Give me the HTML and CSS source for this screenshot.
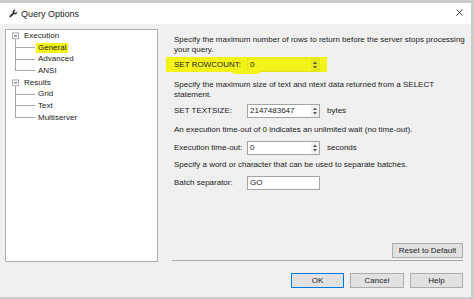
FILE: index.html
```html
<!DOCTYPE html>
<html>
<head>
<meta charset="utf-8">
<link rel="stylesheet" href="styles.css">
</head>
<body>
<div class="window">
  <div class="titlebar">
    <svg class="wrench" width="9" height="9" viewBox="0 0 16 16"><path d="M15 4.2l-2.7 2.7-2.4-.7-.7-2.4L11.9 1A4.3 4.3 0 0 0 6.6 6.6L1.2 12a1.6 1.6 0 0 0 2.3 2.3L8.9 9A4.3 4.3 0 0 0 15 4.2z" fill="#2b2b2b"/></svg>
    <span class="title">Query Options</span>
    <svg class="close" width="7" height="7" viewBox="0 0 7 7"><path d="M0.5 0.5L6.5 6.5M6.5 0.5L0.5 6.5" stroke="#333" stroke-width="0.9"/></svg>
  </div>
  <div class="body">
    <div class="main">
      <div class="tree">
        <div class="row parent">
          <svg class="exp" width="7" height="12" viewBox="0 0 7 12"><line x1="3.5" y1="9.5" x2="3.5" y2="12" stroke="#a6a6a6" stroke-width="1"/><rect x="0.5" y="3" width="6" height="6" fill="#fff" stroke="#a6a6a6" stroke-width="1"/><line x1="2" y1="6" x2="5" y2="6" stroke="#444" stroke-width="1"/></svg>
          <span class="ptext">Execution</span>
        </div>
        <div class="row child"><span class="conn"></span><span class="label sel">General</span></div>
        <div class="row child"><span class="conn"></span><span class="label">Advanced</span></div>
        <div class="row child"><span class="conn last"></span><span class="label">ANSI</span></div>
        <div class="row parent">
          <svg class="exp" width="7" height="12" viewBox="0 0 7 12"><line x1="3.5" y1="9.5" x2="3.5" y2="12" stroke="#a6a6a6" stroke-width="1"/><rect x="0.5" y="3" width="6" height="6" fill="#fff" stroke="#a6a6a6" stroke-width="1"/><line x1="2" y1="6" x2="5" y2="6" stroke="#444" stroke-width="1"/></svg>
          <span class="ptext">Results</span>
        </div>
        <div class="row child"><span class="conn"></span><span class="label">Grid</span></div>
        <div class="row child"><span class="conn"></span><span class="label">Text</span></div>
        <div class="row child"><span class="conn last"></span><span class="label">Multiserver</span></div>
      </div>
      <div class="panel">
        <p class="desc d1">Specify the maximum number of rows to return before the server stops processing your query.</p>
        <div class="field f1 marked">
          <span class="flabel">SET ROWCOUNT:</span>
          <span class="box spin yellow"><span class="val">0</span><svg class="spinner" width="8" height="12" viewBox="0 0 8 12"><path d="M2 5L4 2.5L6 5Z" fill="#555"/><path d="M2 7L4 9.5L6 7Z" fill="#555"/></svg></span>
          <span class="tail"></span>
        </div>
        <p class="desc d2">Specify the maximum size of text and ntext data returned from a SELECT statement.</p>
        <div class="field f2">
          <span class="flabel">SET TEXTSIZE:</span>
          <span class="box spin"><span class="val">2147483647</span><svg class="spinner" width="8" height="12" viewBox="0 0 8 12"><path d="M2 5L4 2.5L6 5Z" fill="#555"/><path d="M2 7L4 9.5L6 7Z" fill="#555"/></svg></span>
          <span class="unit">bytes</span>
        </div>
        <p class="desc d3">An execution time-out of 0 indicates an unlimited wait (no time-out).</p>
        <div class="field f3">
          <span class="flabel">Execution time-out:</span>
          <span class="box spin"><span class="val">0</span><svg class="spinner" width="8" height="12" viewBox="0 0 8 12"><path d="M2 5L4 2.5L6 5Z" fill="#555"/><path d="M2 7L4 9.5L6 7Z" fill="#555"/></svg></span>
          <span class="unit">seconds</span>
        </div>
        <p class="desc d4">Specify a word or character that can be used to separate batches.</p>
        <div class="field f4">
          <span class="flabel">Batch separator:</span>
          <span class="box"><span class="val">GO</span></span>
        </div>
        <button class="btn reset">Reset to Default</button>
      </div>
    </div>
    <div class="footer">
      <button class="btn ok">OK</button>
      <button class="btn cancel">Cancel</button>
      <button class="btn help">Help</button>
    </div>
  </div>
</div>
</body>
</html>
```

FILE: styles.css
```css
html, body {
  margin: 0;
  padding: 0;
  background: #cbcbcb;
}

body {
  width: 474px;
  height: 299px;
  overflow: hidden;
  font-family: "Liberation Sans", Arial, sans-serif;
  font-size: 8px;
  color: #1a1a1a;
}

.window {
  margin-top: 3px;
  width: 471px;
  height: 294px;
  background: #f0f0f0;
  display: flex;
  flex-direction: column;
}

.titlebar {
  height: 21px;
  background: #fff;
  display: flex;
  align-items: center;
  padding-left: 9px;
  padding-right: 8px;
}

.wrench {
  display: block;
  margin-top: -1px;
}

.title {
  margin-left: 3px;
  font-family: "Liberation Sans", Arial, sans-serif;
  font-size: 9px;
  color: #222;
}

.close {
  display: block;
  margin-left: auto;
  margin-top: -2px;
}

.body {
  flex: 1;
  display: flex;
  flex-direction: column;
  padding: 5px 8px 0 5px;
}

.main {
  display: flex;
  height: 233px;
}

.tree {
  width: 153px;
  height: 233px;
  box-sizing: border-box;
  background: #fff;
  border: 1px solid #acacac;
}

.row {
  height: 11.7px;
  display: flex;
  align-items: center;
  line-height: 10px;
}

.exp {
  display: block;
  margin-left: 6px;
  align-self: stretch;
  height: 11.7px;
}

.ptext {
  margin-left: 5px;
}

.conn {
  width: 20px;
  margin-left: 9px;
  align-self: stretch;
  background:
    linear-gradient(#a6a6a6, #a6a6a6) left top / 1px 100% no-repeat,
    linear-gradient(#a6a6a6, #a6a6a6) left center / 100% 1px no-repeat;
}

.conn.last {
  background:
    linear-gradient(#a6a6a6, #a6a6a6) left top / 1px 50% no-repeat,
    linear-gradient(#a6a6a6, #a6a6a6) left center / 100% 1px no-repeat;
}

.label {
  margin-left: 1px;
  padding: 0 2px;
  line-height: 10px;
}

.label.sel {
  background: #f3f31a;
}

.panel {
  flex: 1;
  margin-left: 14px;
  height: 232px;
  box-sizing: border-box;
  padding: 6px 0 0 2px;
  border-bottom: 1px solid #a9a9a9;
  display: flex;
  flex-direction: column;
}

.desc {
  margin: 0 -8px 0 0;
  line-height: 10px;
}

.d2 { margin-top: 8px; }
.d3 { margin-top: 7px; }
.d4 { margin-top: 5px; }

.field {
  display: flex;
  align-items: center;
  height: 15px;
}

.f1 { margin-top: 2px; }
.f2 { margin-top: 3px; }
.f3 { margin-top: 5px; }
.f4 { margin-top: 5px; }

.marked {
  position: relative;
  margin-left: -8px;
  padding-left: 8px;
  width: 153px;
  background: #f3f31a;
}

.tail {
  position: absolute;
  left: 66px;
  top: 14px;
  width: 28px;
  height: 3px;
  background: #f3f31a;
  border-radius: 0 0 3px 6px;
}

.flabel {
  width: 73px;
  flex: none;
}

.box {
  width: 73px;
  height: 14px;
  box-sizing: border-box;
  border: 1px solid #a4a4a4;
  background: #fff;
  display: flex;
  align-items: center;
  flex: none;
}

.box.yellow {
  background: #f3f31a;
  border-color: #e4e41a;
}

.val {
  flex: 1;
  padding-left: 2px;
  line-height: 10px;
}

.spinner {
  display: block;
  width: 8px;
  height: 12px;
  background: #f0f0f0;
}

.box.yellow .spinner {
  background: #e6e61c;
}

.unit {
  margin-left: 7px;
}

.btn {
  font-family: "Liberation Sans", Arial, sans-serif;
  font-size: 8px;
  color: #1e1e1e;
  height: 15px;
  padding: 0;
  box-sizing: border-box;
  background: #e1e1e1;
  border: 1px solid #adadad;
  border-radius: 0;
}

.reset {
  margin-top: auto;
  margin-bottom: 2px;
  align-self: flex-end;
  width: 71px;
}

.footer {
  display: flex;
  justify-content: flex-end;
  gap: 6px;
  margin-top: 11px;
}

.ok {
  width: 53px;
  border-color: #0078d7;
  box-shadow: inset 0 0 0 1px #d8e6f2;
}

.cancel {
  width: 54px;
}

.help {
  width: 53px;
}
```
